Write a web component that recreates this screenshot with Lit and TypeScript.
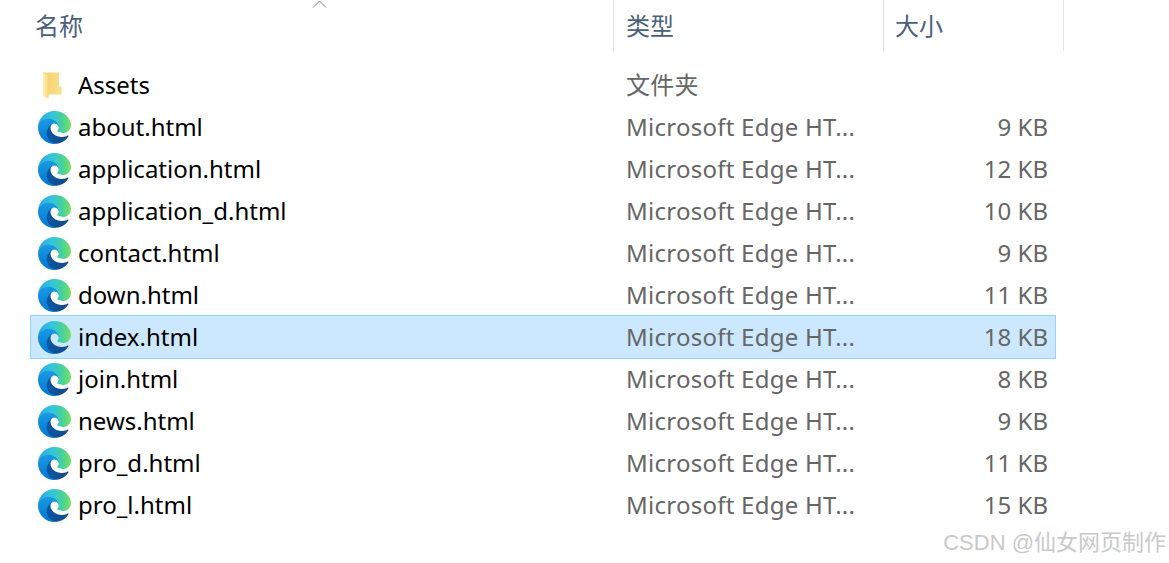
import { LitElement, html, css, svg } from "lit";
import { customElement } from "lit/decorators.js";

interface FileRow {
  name: string;
  type: string;
  size: string;
  folder?: boolean;
  selected?: boolean;
}

const EDGE_TYPE = "Microsoft Edge HT...";

const ROWS: FileRow[] = [
  { name: "Assets", type: "文件夹", size: "", folder: true },
  { name: "about.html", type: EDGE_TYPE, size: "9 KB" },
  { name: "application.html", type: EDGE_TYPE, size: "12 KB" },
  { name: "application_d.html", type: EDGE_TYPE, size: "10 KB" },
  { name: "contact.html", type: EDGE_TYPE, size: "9 KB" },
  { name: "down.html", type: EDGE_TYPE, size: "11 KB" },
  { name: "index.html", type: EDGE_TYPE, size: "18 KB", selected: true },
  { name: "join.html", type: EDGE_TYPE, size: "8 KB" },
  { name: "news.html", type: EDGE_TYPE, size: "9 KB" },
  { name: "pro_d.html", type: EDGE_TYPE, size: "11 KB" },
  { name: "pro_l.html", type: EDGE_TYPE, size: "15 KB" },
];

// shared gradients, the icons below reference them by id
const iconDefs = svg`
  <defs>
    <linearGradient id="edgeTop" x1="0" y1="0.45" x2="1" y2="0.45">
      <stop offset="0" stop-color="#2aa6e4" />
      <stop offset="0.4" stop-color="#33c3e0" />
      <stop offset="0.72" stop-color="#45d0a0" />
      <stop offset="1" stop-color="#7be05c" />
    </linearGradient>
    <linearGradient id="edgeLeft" x1="0.5" y1="0" x2="0.55" y2="1">
      <stop offset="0" stop-color="#1b9de2" />
      <stop offset="0.6" stop-color="#0a84d8" />
      <stop offset="1" stop-color="#0078d4" />
    </linearGradient>
    <linearGradient id="edgeWave" x1="0" y1="0.3" x2="1" y2="0.6">
      <stop offset="0" stop-color="#0c59a4" />
      <stop offset="1" stop-color="#114a8b" />
    </linearGradient>
    <linearGradient id="folderBack" x1="0" y1="0" x2="1" y2="0">
      <stop offset="0" stop-color="#f0cf6c" />
      <stop offset="1" stop-color="#fbe08e" />
    </linearGradient>
    <linearGradient id="folderFront" x1="0" y1="0" x2="1" y2="0">
      <stop offset="0" stop-color="#fff0b4" />
      <stop offset="1" stop-color="#f6d777" />
    </linearGradient>
  </defs>
`;

const edgeIcon = html`<svg class="icon" viewBox="0 0 256 256" width="33" height="33">
  <path fill="url(#edgeWave)" d="M231.300 190.500c-3.400 1.800-6.900 3.400-10.500 4.700a101.600 101.600 0 0 1-35.800 6.400c-47.200 0-88.300-32.400-88.300-74.100a31.600 31.600 0 0 1 16.400-27.300c-42.700 1.800-53.700 46.300-53.700 72.300 0 73.900 68 81.300 82.700 81.300 7.900 0 19.800-2.300 27-4.600l1.300-.4a127 127 0 0 0 66.100-52.400 4 4 0 0 0-5.200-5.700z" />
  <path fill="url(#edgeLeft)" d="M105.700 241.400a78.600 78.600 0 0 1-22.600-21.200 80.100 80.100 0 0 1 29.300-119.100c3.200-1.500 8.500-4.100 15.600-4a32.400 32.400 0 0 1 25.700 13 31.900 31.900 0 0 1 6.300 18.700c0-.2 24.500-79.600-80-79.600C35.900 49.200 0 90.600 0 127a129 129 0 0 0 12 55.600 128 128 0 0 0 156.400 67 75.500 75.500 0 0 1-62.600-8.200z" />
  <path fill="url(#edgeTop)" d="M152.300 148.800c-.8 1-3.300 2.500-3.300 5.700 0 2.600 1.700 5.100 4.700 7.200 14.400 10 41.500 8.700 41.600 8.700a59.600 59.600 0 0 0 30.300-8.300A61.400 61.400 0 0 0 256 110.900c.3-22.400-8-37.300-11.300-43.900C223.500 25.600 177.700 0 128 0A128 128 0 0 0 0 126.200c.5-36.500 36.800-66 80-66 3.500 0 23.500.3 42 10a72.600 72.600 0 0 1 30.900 29.300c6.100 10.600 7.200 24.100 7.200 29.500s-2.700 13.300-7.800 19.900z" />
</svg>`;

const folderIcon = html`<svg class="icon" viewBox="0 0 33 33" width="33" height="33">
  <path fill="url(#folderBack)" d="M5 3.500h16v14h2.500v8H5z" />
  <path fill="url(#folderFront)" d="M5 3.500 10.500 5.500v24l-5-2-.5-.5z" />
</svg>`;

@customElement("app-root")
export class AppRoot extends LitElement {
  static styles = css`
    :host {
      display: block;
      position: relative;
      height: 563px;
      overflow: hidden;
      background: #fff;
      font-family: "Noto Sans", "Noto Sans CJK SC", sans-serif;
      font-size: 24px;
    }
    .head {
      display: grid;
      grid-template-columns: 614px 270px 180px;
      height: 51px;
      color: #4c607a;
      margin-bottom: 13px;
    }
    .head > div {
      display: flex;
      align-items: center;
      padding-left: 12px;
      padding-bottom: 3px;
      box-sizing: border-box;
      border-right: 1px solid #e5e5e5;
    }
    .head > div:first-child {
      padding-left: 35px;
    }
    .head > div:last-child {
      padding-left: 11px;
    }
    .sort {
      position: absolute;
      left: 312px;
      top: 0;
    }
    .row {
      display: grid;
      grid-template-columns: 583px 270px 173px;
      width: 1026px;
      height: 42px;
      margin-left: 30px;
      align-items: center;
      line-height: 42px;
    }
    .row.selected {
      background: #cce8ff;
      box-shadow: 0 -1px 0 #99d1ff, 0 1px 0 #99d1ff, inset 1px 0 0 #99d1ff, inset -1px 0 0 #99d1ff;
    }
    .name {
      display: flex;
      align-items: center;
      gap: 7px;
      padding-left: 8px;
      color: #000;
    }
    .icon {
      flex: none;
      display: block;
    }
    .type {
      padding-left: 13px;
      color: #666;
      white-space: nowrap;
      letter-spacing: 0.25px;
    }
    .size {
      padding-right: 8px;
      text-align: right;
      color: #666;
    }
    .defs {
      position: absolute;
      width: 0;
      height: 0;
    }
    .mark {
      position: absolute;
      right: 3px;
      bottom: 6px;
      font-family: "Liberation Sans", "Noto Sans CJK SC", sans-serif;
      font-size: 22px;
      line-height: 28px;
      color: #c9c9c9;
      white-space: nowrap;
    }
  `;

  render() {
    return html`
      <svg class="defs">${iconDefs}</svg>
      <div class="head">
        <div>名称</div>
        <div>类型</div>
        <div>大小</div>
      </div>
      <svg class="sort" width="15" height="8" viewBox="0 0 15 8">
        <path d="M1 7.500 7.500 1 14 7.500" fill="none" stroke="#7b7b7b" stroke-width="1" />
      </svg>
      ${ROWS.map(
        (r) => html`
          <div class="row ${r.selected ? "selected" : ""}">
            <div class="name">${r.folder ? folderIcon : edgeIcon}<span>${r.name}</span></div>
            <div class="type">${r.type}</div>
            <div class="size">${r.size}</div>
          </div>
        `
      )}
      <div class="mark">CSDN @仙女网页制作</div>
    `;
  }
}
